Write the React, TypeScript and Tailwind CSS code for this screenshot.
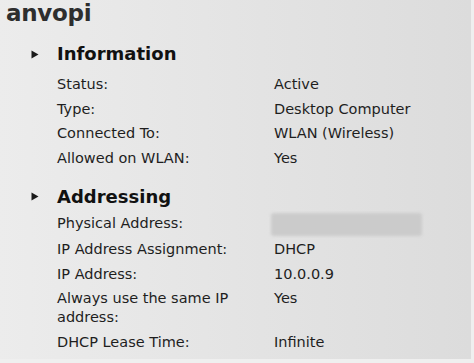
import React from "react";

type Row = { label: string; value?: string; blurred?: boolean };

const info: Row[] = [
  { label: "Status:", value: "Active" },
  { label: "Type:", value: "Desktop Computer" },
  { label: "Connected To:", value: "WLAN (Wireless)" },
  { label: "Allowed on WLAN:", value: "Yes" },
];

const addressing: Row[] = [
  { label: "Physical Address:", blurred: true },
  { label: "IP Address Assignment:", value: "DHCP" },
  { label: "IP Address:", value: "10.0.0.9" },
  { label: "Always use the same IP address:", value: "Yes" },
  { label: "DHCP Lease Time:", value: "Infinite" },
];

// Small filled disclosure triangle, pointing right.
function Arrow() {
  return (
    <svg width="8" height="9" viewBox="0 0 8 9" className="shrink-0">
      <path d="M0.5 0.5 L7.5 4.5 L0.5 8.5 Z" fill="#1a1a1a" />
    </svg>
  );
}

function Section({ title, rows, first }: { title: string; rows: Row[]; first?: boolean }) {
  return (
    <section className={first ? "mt-[16px]" : "mt-[17px]"}>
      <div className="flex items-center h-[24px]">
        <div className="w-[57px] flex justify-end pr-[18px]">
          <Arrow />
        </div>
        <h2 className="text-[18px] font-bold text-[#111] leading-[24px]">{title}</h2>
      </div>
      <div className={`${first ? "mt-[9px]" : "mt-[5px]"} pl-[57px] flex flex-col gap-y-[5.5px]`}>
        {rows.map((r) => (
          <div key={r.label} className="flex text-[14.5px] leading-[19px] text-[#1e1e1e]">
            <div className="w-[205px] shrink-0">{r.label}</div>
            <div className="pl-[12px]">
              {r.blurred ? (
                <div className="ml-[-3px] w-[151px] h-[23px] -my-[1px] bg-[#cbcbcb] rounded-[3px] blur-[1.5px]" />
              ) : (
                r.value
              )}
            </div>
          </div>
        ))}
      </div>
    </section>
  );
}

export default function App() {
  return (
    <div
      className="w-[474px] h-[363px] bg-[#efefef] overflow-hidden"
      style={{ fontFamily: '"DejaVu Sans", Verdana, sans-serif' }}
    >
      <div className="w-[471px] h-[359px] bg-gradient-to-r from-[#ececec] to-[#dcdcdc]">
        <h1 className="pl-[6px] text-[23px] font-bold text-[#2e2e2e] leading-[26px] tracking-[-0.3px]">
          anvopi
        </h1>
        <Section title="Information" rows={info} first />
        <Section title="Addressing" rows={addressing} />
      </div>
    </div>
  );
}
